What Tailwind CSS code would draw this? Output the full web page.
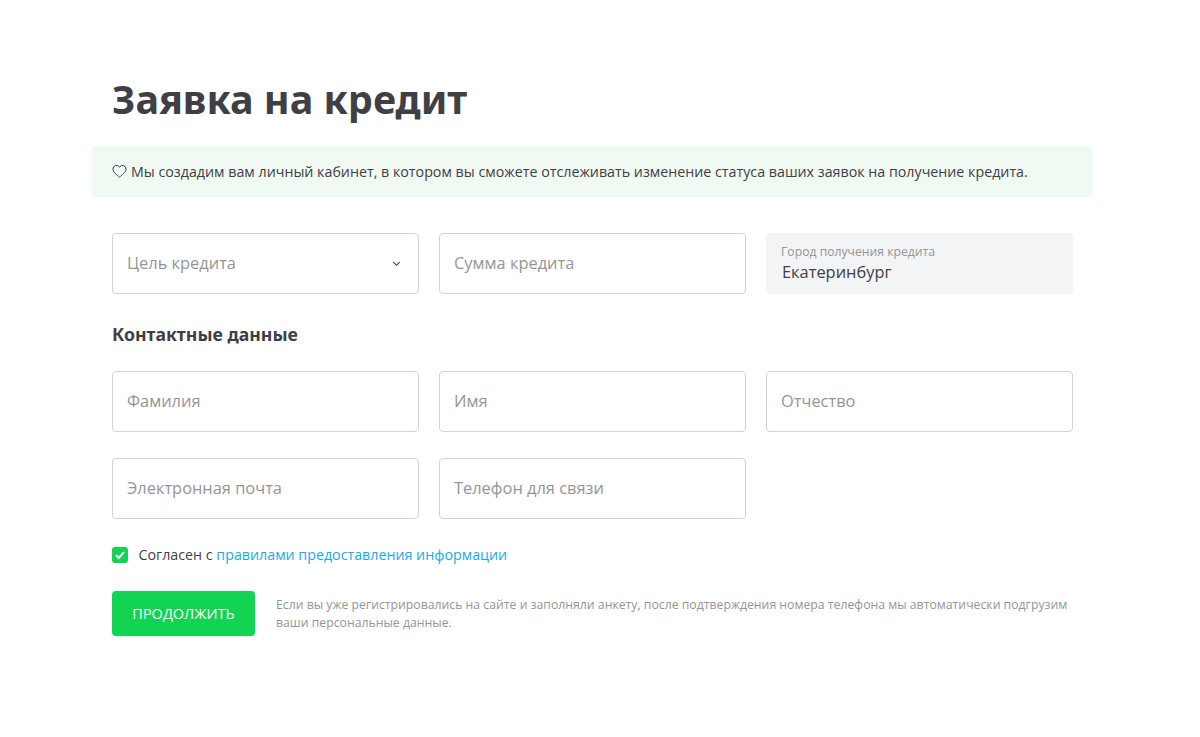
<!DOCTYPE html>
<html lang="ru">
<head>
<meta charset="utf-8">
<title>Заявка на кредит</title>
<script src="https://cdn.jsdelivr.net/npm/@tailwindcss/browser@4"></script>
</head>
<body class="bg-white font-['Open_Sans','Noto_Sans',sans-serif] text-[#3f4045]">
<div class="w-[1200px] h-[737px] overflow-hidden pt-[71px] pl-[92px]">
  <div class="w-[1001px]">
    <h1 class="pl-5 h-[75px] text-[39.5px] leading-[56px] font-bold font-['Noto_Sans',sans-serif]">Заявка на кредит</h1>

    <div class="h-[51px] flex items-center pl-5 gap-1 bg-[#f1f9f3] rounded-[4px] text-[14.25px]">
      <svg class="w-[15px] h-[15px]" viewBox="0 0 24 24" fill="none" stroke="#3f4045" stroke-width="1.6" stroke-linejoin="round"><path d="M12 21C8 17.500 1.500 13 1.500 8a5.700 5.700 0 0 1 10.500-3 5.700 5.700 0 0 1 10.500 3c0 5-6.500 9.500-10.500 13z"/></svg>
      <span>Мы создадим вам личный кабинет, в котором вы сможете отслеживать изменение статуса ваших заявок на получение кредита.</span>
    </div>

    <div class="px-5 pt-9">
      <div class="grid grid-cols-[307px_307px_307px] gap-x-5">
        <div class="h-[61px] border border-[#d2d3d6] rounded-[4px] flex items-center justify-between pl-[14px] pr-4 text-[16.4px] text-[#949598]">
          <span>Цель кредита</span>
          <svg class="w-[11px] h-[11px]" viewBox="0 0 12 12" fill="none" stroke="#3f4045" stroke-width="1.200"><path d="M2.500 4.500 6 8l3.500-3.500"/></svg>
        </div>
        <div class="h-[61px] border border-[#d2d3d6] rounded-[4px] flex items-center pl-[14px] text-[16.4px] text-[#949598]">Сумма кредита</div>
        <div class="h-[61px] bg-[#f3f4f6] rounded-[4px] pl-[15px] pt-[11px]">
          <div class="text-[12.2px] leading-[16px] text-[#949598]">Город получения кредита</div>
          <div class="text-[16.4px] leading-[24px] pl-px">Екатеринбург</div>
        </div>
      </div>

      <h2 class="mt-[27px] h-[27px] text-[17.7px] leading-[27px] font-bold font-['Noto_Sans',sans-serif]">Контактные данные</h2>

      <div class="mt-[23px] grid grid-cols-[307px_307px_307px] gap-x-5 gap-y-[26px]">
        <div class="h-[61px] border border-[#d2d3d6] rounded-[4px] flex items-center pl-[14px] text-[16.4px] text-[#949598]">Фамилия</div>
        <div class="h-[61px] border border-[#d2d3d6] rounded-[4px] flex items-center pl-[14px] text-[16.4px] text-[#949598]">Имя</div>
        <div class="h-[61px] border border-[#d2d3d6] rounded-[4px] flex items-center pl-[14px] text-[16.4px] text-[#949598]">Отчество</div>
        <div class="h-[61px] border border-[#d2d3d6] rounded-[4px] flex items-center pl-[14px] text-[16.4px] text-[#949598]">Электронная почта</div>
        <div class="h-[61px] border border-[#d2d3d6] rounded-[4px] flex items-center pl-[14px] text-[16.4px] text-[#949598]">Телефон для связи</div>
      </div>

      <div class="mt-7 h-4 flex items-center gap-[10.5px] text-[14.25px]">
        <span class="w-4 h-4 rounded-[3px] bg-[#12d452] flex items-center justify-center">
          <svg class="w-3 h-3" viewBox="0 0 12 12" fill="none" stroke="#fff" stroke-width="2"><path d="M2 6.200 4.800 9 10 3.200"/></svg>
        </span>
        <span>Согласен с <a href="#" class="text-[#1aa9f2]">правилами предоставления информации</a></span>
      </div>

      <div class="mt-[28px] flex items-center gap-[21px]">
        <button class="w-[143px] h-[45px] rounded-[4px] bg-[#12d452] text-white text-[14.5px]">ПРОДОЛЖИТЬ</button>
        <p class="w-[797px] text-[12.25px] leading-[18px] text-[#949598]">Если вы уже регистрировались на сайте и заполняли анкету, после подтверждения номера телефона мы автоматически подгрузим ваши персональные данные.</p>
      </div>
    </div>
  </div>
</div>
</body>
</html>
